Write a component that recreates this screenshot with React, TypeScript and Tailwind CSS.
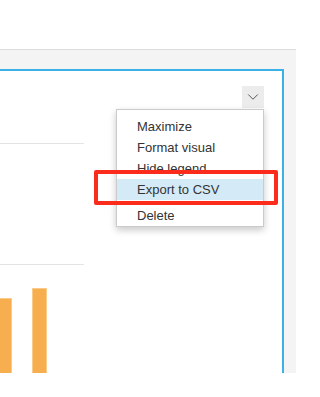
import { ChevronDown } from 'lucide-react';

const items = ['Maximize', 'Format visual', 'Hide legend', 'Export to CSV'];

export default function App() {
  return (
    <div className="relative w-[320px] h-[397px] bg-white overflow-hidden font-['Liberation_Sans',Arial,sans-serif]">
      <div className="h-[49px]" />
      <div className="w-[296px] h-[324px] bg-[#f4f4f4] border-t border-[#dcdcdc] pt-[19px] pr-[12px] overflow-hidden">
        <div className="relative h-[400px] bg-white border-2 border-l-0 border-[#3cb1e6]">
          <div className="w-[84px]">
            <div className="h-[73px] border-b border-[#e4e4e4]" />
            <div className="h-[121px] border-b border-[#e4e4e4]" />
            <div className="flex items-start">
              <div className="mt-[33px] w-[12px] h-[200px] bg-[#f7ae4f] border-r border-t border-[#fbcb8a]" />
              <div className="ml-[20px] mt-[23px] w-[15px] h-[200px] bg-[#f7ae4f] border border-[#fbcb8a]" />
            </div>
          </div>
          <button className="absolute top-[15px] right-[18px] w-[22px] h-[22px] bg-[#ececec] flex items-center justify-center">
            <ChevronDown size={18} strokeWidth={1.3} className="text-[#555]" />
          </button>
        </div>
      </div>

      <div className="absolute left-[116px] top-[109px] w-[148px] bg-white border border-[#cbcbcb] shadow-[0_3px_7px_rgba(0,0,0,0.22)] pt-[6px] text-[13px] text-[#333]">
        {items.map((t) => (
          <div
            key={t}
            className={`h-[21px] leading-[21px] pl-[20px] ${t === 'Export to CSV' ? 'bg-[#d5eaf7]' : ''}`}
          >
            {t}
          </div>
        ))}
        <div className="mt-[5px] h-[21px] leading-[21px] pl-[20px]">Delete</div>
      </div>

      <div className="absolute left-[94px] top-[170px] w-[184px] h-[35px] border-4 border-[#fb2c1c] rounded-[2px]" />
    </div>
  );
}
